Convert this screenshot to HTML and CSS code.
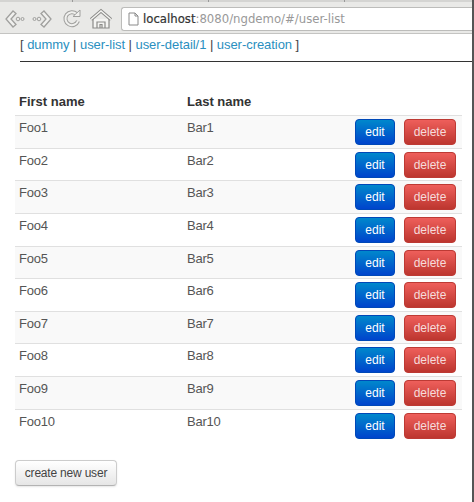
FILE: index.html
```html
<!DOCTYPE html>
<html lang="en">

<head>
    <meta charset="UTF-8">
    <title>ngdemo</title>
    <link rel="stylesheet" href="styles.css">
</head>

<body>
    <div class="toolbar">
        <div class="nav-icons">
            <svg width="26" height="24" viewBox="0 0 26 24"><path d="M12 4 L5 12 L12 20 L15 17.5 L10 12 L15 6.5 Z" fill="#f0f0ee" stroke="#a0a09e" stroke-width="1.3"/><circle cx="17" cy="12" r="1.8" fill="none" stroke="#a0a09e"/><circle cx="21.5" cy="12" r="1.5" fill="none" stroke="#a0a09e"/></svg>
            <svg width="26" height="24" viewBox="0 0 26 24"><path d="M14 4 L21 12 L14 20 L11 17.5 L16 12 L11 6.5 Z" fill="#f0f0ee" stroke="#a0a09e" stroke-width="1.3"/><circle cx="9" cy="12" r="1.8" fill="none" stroke="#a0a09e"/><circle cx="4.5" cy="12" r="1.5" fill="none" stroke="#a0a09e"/></svg>
            <svg width="26" height="24" viewBox="0 0 26 24"><path d="M17.5 7 A6.5 6.5 0 1 0 19 14" fill="none" stroke="#a0a09e" stroke-width="4"/><path d="M17.5 7 A6.5 6.5 0 1 0 19 14" fill="none" stroke="#f0f0ee" stroke-width="2"/><path d="M14 9.5 L21 9.5 L21 3 Z" fill="#f0f0ee" stroke="#a0a09e"/></svg>
            <svg width="26" height="24" viewBox="0 0 26 24"><path d="M5 12 V21 H21 V12" fill="#f4f4f2" stroke="#8b8b89" stroke-width="1.2"/><path d="M3 12.5 L13 4 L23 12.5" fill="none" stroke="#8b8b89" stroke-width="3.4"/><path d="M3 12.5 L13 4 L23 12.5" fill="none" stroke="#f4f4f2" stroke-width="1.4"/><path d="M9 21 V15 H17 V21 M12 21 V17.5 H14 V21" fill="none" stroke="#8b8b89" stroke-width="1.2"/></svg>
        </div>
        <div class="url-bar">
            <svg width="11" height="14" viewBox="0 0 11 14"><path d="M1 1 H7 L10 4 V13 H1 Z M7 1 V4 H10" fill="#fff" stroke="#8a8a8a"/></svg>
            <span class="url"><b>localhost</b>:8080/ngdemo/#/user-list</span>
        </div>
    </div>

    <div class="page">
        <div class="menu">
            [ <a href="#">dummy</a> | <a href="#">user-list</a> | <a href="#">user-detail/1</a> | <a href="#">user-creation</a> ]
        </div>
        <hr class="menu-rule">

        <table class="users">
            <thead>
                <tr><th class="col-first">First name</th><th class="col-last">Last name</th><th></th></tr>
            </thead>
            <tbody>
                <tr><td>Foo1</td><td>Bar1</td><td class="actions"><a class="btn btn-edit">edit</a><a class="btn btn-delete">delete</a></td></tr>
                <tr><td>Foo2</td><td>Bar2</td><td class="actions"><a class="btn btn-edit">edit</a><a class="btn btn-delete">delete</a></td></tr>
                <tr><td>Foo3</td><td>Bar3</td><td class="actions"><a class="btn btn-edit">edit</a><a class="btn btn-delete">delete</a></td></tr>
                <tr><td>Foo4</td><td>Bar4</td><td class="actions"><a class="btn btn-edit">edit</a><a class="btn btn-delete">delete</a></td></tr>
                <tr><td>Foo5</td><td>Bar5</td><td class="actions"><a class="btn btn-edit">edit</a><a class="btn btn-delete">delete</a></td></tr>
                <tr><td>Foo6</td><td>Bar6</td><td class="actions"><a class="btn btn-edit">edit</a><a class="btn btn-delete">delete</a></td></tr>
                <tr><td>Foo7</td><td>Bar7</td><td class="actions"><a class="btn btn-edit">edit</a><a class="btn btn-delete">delete</a></td></tr>
                <tr><td>Foo8</td><td>Bar8</td><td class="actions"><a class="btn btn-edit">edit</a><a class="btn btn-delete">delete</a></td></tr>
                <tr><td>Foo9</td><td>Bar9</td><td class="actions"><a class="btn btn-edit">edit</a><a class="btn btn-delete">delete</a></td></tr>
                <tr><td>Foo10</td><td>Bar10</td><td class="actions"><a class="btn btn-edit">edit</a><a class="btn btn-delete">delete</a></td></tr>
            </tbody>
        </table>

        <a class="btn btn-create">create new user</a>
    </div>
</body>

</html>
```
FILE: styles.css
```css
html {
    height: 100%;
}

body {
    margin: 0;
    height: 502px;
    overflow: hidden;
    background: #fff;
    border-right: 2px solid #555;
    box-sizing: border-box;
    font-family: "Liberation Sans", Arial, sans-serif;
    font-size: 13px;
    color: #333;
}

/* browser chrome */
.toolbar {
    height: 34px;
    box-sizing: border-box;
    display: flex;
    align-items: center;
    gap: 7px;
    padding: 4px 0 0 1px;
    background: repeating-linear-gradient(90deg, #d4d4d2 0, #d4d4d2 72px, #999 72px, #999 73px, #d4d4d2 73px, #d4d4d2 136px) top / 100% 2px no-repeat, #e9e9e7;
    border-bottom: 1px solid #c4c4c2;
}

.nav-icons {
    display: flex;
    gap: 3px;
}

.url-bar {
    flex: 1;
    height: 24px;
    box-sizing: border-box;
    display: flex;
    align-items: center;
    gap: 4px;
    padding-left: 6px;
    background: #fff;
    border: 1px solid #bcbcba;
    border-right: 0;
    border-radius: 3px 0 0 3px;
    font-family: "DejaVu Sans", sans-serif;
    font-size: 11.7px;
    color: #999;
}

.url b {
    font-weight: normal;
    color: #333;
    -webkit-text-stroke: 0.2px #333;
}

/* page */
.page {
    padding: 0 10px 0 15px;
}

.menu {
    padding: 1px 0 0 5px;
    line-height: 20px;
    letter-spacing: -0.05px;
    color: #444;
}

.menu a {
    color: #2a8fc0;
    text-decoration: none;
}

.menu-rule {
    margin: 6px -10px 0 5px;
    border: 0;
    border-top: 1px solid #333;
}

.users {
    width: 447px;
    margin-top: 26px;
    border-collapse: collapse;
}

.users th {
    height: 27px;
    padding: 0 4px;
    text-align: left;
    font-size: 13px;
    color: #333;
}

.col-first {
    width: 160px;
}

.users td {
    height: 32.65px;
    padding: 2px 4px 0;
    box-sizing: border-box;
    vertical-align: top;
    line-height: 20px;
    letter-spacing: -0.25px;
    border-top: 1px solid #e0e0e0;
    color: #555;
}

.users thead tr {
    border-bottom: 1px solid #e0e0e0;
}

.users tbody tr:nth-child(odd) td {
    background: #f9f9f9;
}

.users td.actions {
    width: 115px;
    padding: 3px 6px 0 0;
    white-space: nowrap;
    text-align: right;
    letter-spacing: 0;
}

.btn {
    display: inline-block;
    box-sizing: border-box;
    height: 26px;
    line-height: 25px;
    border-radius: 4px;
    font-size: 12px;
    text-align: center;
    color: #fff;
}

.btn-edit {
    width: 40px;
    margin-right: 9px;
    background: linear-gradient(#0088cc, #0044cc);
    border: 1px solid #0048b8;
}

.btn-delete {
    width: 52px;
    background: linear-gradient(#ee5f5b, #bd362f);
    border: 1px solid #bd3a34;
    color: #f6dcdb;
}

.btn-create {
    width: 102px;
    margin-top: 18px;
    color: #444;
    letter-spacing: -0.2px;
    background: linear-gradient(#fff, #e6e6e6);
    border: 1px solid #ccc;
    border-bottom-color: #b3b3b3;
    box-shadow: 0 1px 2px rgba(0, 0, 0, 0.1);
}
```
